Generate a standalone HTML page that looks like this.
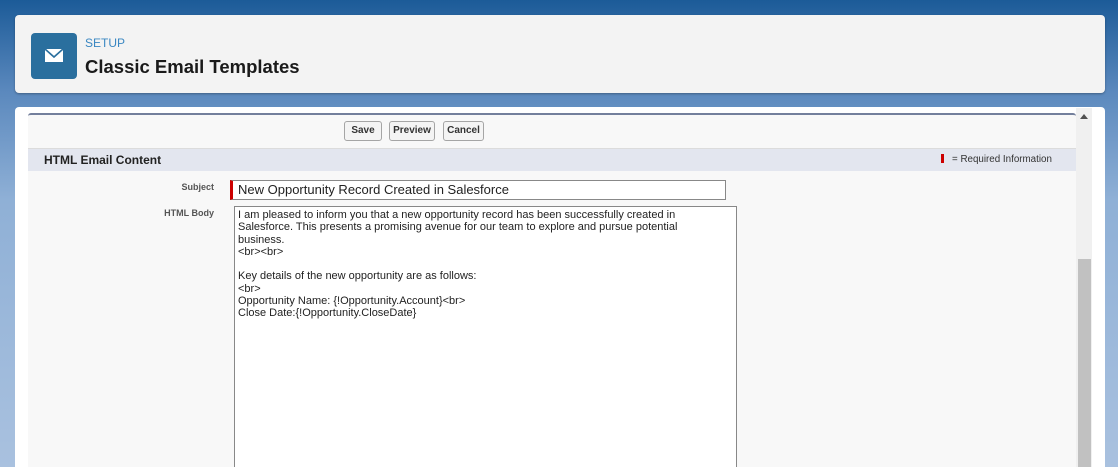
<!DOCTYPE html>
<html><head><meta charset="utf-8"><style>
*{box-sizing:border-box;margin:0;padding:0}
html{width:1118px;height:467px;overflow:hidden}
body{width:1118px;height:467px;overflow:hidden;font-family:"Liberation Sans",Arial,sans-serif;background:linear-gradient(#1c5b98 0px,#5a88bd 90px,#8fb0d6 200px,#a9c1df 467px);position:relative}
.hdr{position:absolute;left:15px;top:15px;width:1090px;height:78px;background:#f3f3f3;border-radius:4px;box-shadow:0 1px 2px rgba(0,0,0,.3)}
.ico{position:absolute;left:16px;top:18px;width:46px;height:46px;background:#2a6f9e;border-radius:4px}
.setup{position:absolute;left:70px;top:21px;font-size:12px;color:#3a87c2}
.title{position:absolute;left:70px;top:41px;font-size:18.5px;font-weight:bold;color:#1a1a1a}
.card{position:absolute;left:15px;top:107px;width:1090px;height:360px;background:#fff;border-radius:4px 4px 0 0;overflow:hidden}
.panel{position:absolute;left:13px;top:6px;width:1048px;height:354px;background:#f8f8f8;border-top:2px solid #737f9c;border-radius:3px 3px 0 0;overflow:hidden}
.btn{position:absolute;top:6px;height:20px;border:1px solid #a5a5a5;border-radius:3px;background:#f4f4f4;font-size:10px;font-weight:bold;color:#333;text-align:center;line-height:18px}
.sep{position:absolute;left:0;top:33px;width:100%;height:1px;background:#dcdcdc}
.sec{position:absolute;left:0;top:34px;width:100%;height:22px;background:#e3e6ef}
.sec b{position:absolute;left:16px;top:4px;font-size:12px;color:#222;font-weight:bold}
.req{position:absolute;left:913px;top:5px;font-size:9.8px;color:#333}
.req i{display:inline-block;width:3px;height:9px;background:#c00;margin-right:8px;vertical-align:-1px}
.lbl{position:absolute;font-size:9px;font-weight:bold;color:#555;text-align:right;width:200px}
.inp{position:absolute;left:202px;top:65px;width:496px;height:20px;border:1px solid #888;border-left:3px solid #c00;background:#fff;font-size:13px;color:#222;padding:1px 5px;line-height:16px}
.ta{position:absolute;left:206px;top:91px;width:503px;height:270px;border:1px solid #888;background:#fff;font-size:11px;color:#222;padding:2px 3px;line-height:12.3px;white-space:pre}
.sb{position:absolute;left:1076px;top:108px;width:16px;height:359px;background:#f0f0f0;overflow:hidden}
.sb .up{position:absolute;left:4px;top:6px;width:0;height:0;border-left:4px solid transparent;border-right:4px solid transparent;border-bottom:5px solid #505050}
.sb .th{position:absolute;left:2px;top:151px;width:13px;height:208px;background:#c1c1c1}
</style></head><body>
<div class="hdr">
<div class="ico"><svg width="46" height="46"><rect x="14" y="16" width="18" height="13" fill="#fff"/><path d="M14 16 L23 24 L32 16" fill="none" stroke="#2a6f9e" stroke-width="1.6"/></svg></div>
<div class="setup">SETUP</div>
<div class="title">Classic Email Templates</div>
</div>
<div class="card">
<div class="panel">
<div class="btn" style="left:316px;width:38px">Save</div>
<div class="btn" style="left:361px;width:46px">Preview</div>
<div class="btn" style="left:415px;width:41px">Cancel</div>
<div class="sep"></div>
<div class="sec"><b>HTML Email Content</b><div class="req"><i></i>= Required Information</div></div>
<div class="lbl" style="left:-14px;top:67px">Subject</div>
<div class="lbl" style="left:-14px;top:93px">HTML Body</div>
<div class="inp">New Opportunity Record Created in Salesforce</div>
<div class="ta">I am pleased to inform you that a new opportunity record has been successfully created in
Salesforce. This presents a promising avenue for our team to explore and pursue potential
business.
&lt;br&gt;&lt;br&gt;

Key details of the new opportunity are as follows:
&lt;br&gt;
Opportunity Name: {!Opportunity.Account}&lt;br&gt;
Close Date:{!Opportunity.CloseDate}</div>
</div>
</div>
<div class="sb"><div class="up"></div><div class="th"></div></div>
</body></html>
